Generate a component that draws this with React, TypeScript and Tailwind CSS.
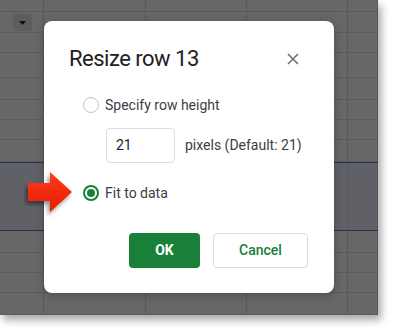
import React from "react";

const rows = [12, 21, 20, 25, 22, 20, 20, 22, 69, 22, 20, 20, 22];
const cols = [44, 102, 101, 101, 30];

export default function App() {
  return (
    <div
      className="relative w-[393px] h-[329px] bg-white overflow-hidden"
      style={{ fontFamily: "Roboto, 'Liberation Sans', sans-serif" }}
    >
      {/* spreadsheet backdrop */}
      <div className="relative w-[378px] h-[315px] bg-[#676767] shadow-[3px_5px_8px_rgba(0,0,0,0.35)] flex flex-col overflow-hidden">
        {rows.map((h, i) => {
          const selected = i === 8;
          return (
            <div
              key={i}
              className={
                selected
                  ? "flex bg-[#5f6167] border-y border-[#27335a]"
                  : "flex border-b border-[#5b5b5b]"
              }
              style={{ height: h }}
            >
              {cols.map((w, j) => (
                <div
                  key={j}
                  className="h-full border-r border-[#595959]"
                  style={{ width: w }}
                />
              ))}
            </div>
          );
        })}
        {/* header dropdown chip */}
        <div className="absolute left-[13px] top-[14px] w-[19px] h-[17px] rounded bg-[#5d5d5d] flex items-center justify-center">
          <svg width="7" height="4" viewBox="0 0 7 4">
            <path d="M0 0h7L3.5 4z" fill="#111" />
          </svg>
        </div>
      </div>

      {/* dialog */}
      <div className="absolute left-[44px] top-[21px] w-[290px] h-[272px] bg-white rounded-[8px] shadow-[0_2px_8px_rgba(0,0,0,0.25)] flex flex-col">
        <div className="flex items-center justify-between pl-[25px] pr-[29px] pt-[24px]">
          <div className="text-[22px] leading-[28px] text-[#202124] tracking-[-0.5px]">
            Resize row 13
          </div>
          <div className="w-[24px] h-[24px] flex items-center justify-center">
            <svg width="12" height="12" viewBox="0 0 12 12">
              <path d="M1 1L11 11M11 1L1 11" stroke="#6b6b6b" strokeWidth="1.5" />
            </svg>
          </div>
        </div>

        <div className="flex items-center pl-[39px] mt-[23px] h-[18px]">
          <div className="w-[16px] h-[16px] rounded-full border border-[#c4c4c4]" />
          <span className="ml-[6px] text-[14px] text-[#3c4043]">Specify row height</span>
        </div>

        <div className="flex items-center pl-[62px] mt-[14px]">
          <div className="w-[69px] h-[35px] rounded-[4px] border border-[#dadce0] flex items-center pl-[9px] text-[14px] text-[#202124]">
            21
          </div>
          <span className="ml-[10px] text-[14px] text-[#3c4043]">pixels (Default: 21)</span>
        </div>

        <div className="flex items-center pl-[39px] mt-[21px] h-[18px]">
          <div className="w-[16px] h-[16px] rounded-full border-2 border-[#188038] flex items-center justify-center">
            <div className="w-[8px] h-[8px] rounded-full bg-[#188038]" />
          </div>
          <span className="ml-[6px] text-[14px] text-[#3c4043]">Fit to data</span>
        </div>

        <div className="flex justify-end gap-[13px] pr-[26px] mt-[31px]">
          <div className="w-[71px] h-[35px] rounded-[4px] bg-[#188038] flex items-center justify-center text-white text-[14px] font-bold">
            OK
          </div>
          <div className="w-[95px] h-[35px] rounded-[4px] border border-[#dadce0] flex items-center justify-center text-[#188038] text-[14px] font-medium">
            Cancel
          </div>
        </div>
      </div>

      {/* red arrow */}
      <svg
        className="absolute left-[24px] top-[168px]"
        width="56"
        height="52"
        viewBox="0 0 56 52"
      >
        <defs>
          <linearGradient id="ar" x1="0" y1="0" x2="0" y2="1">
            <stop offset="0" stopColor="#ff3b1f" />
            <stop offset="1" stopColor="#e61c00" />
          </linearGradient>
          <filter id="sh" x="-30%" y="-30%" width="160%" height="160%">
            <feDropShadow dx="-2" dy="3" stdDeviation="2" floodColor="#000" floodOpacity="0.45" />
          </filter>
        </defs>
        <path
          d="M4 15H26V4L48 24L26 44V33H4Z"
          fill="url(#ar)"
          filter="url(#sh)"
        />
      </svg>
    </div>
  );
}
